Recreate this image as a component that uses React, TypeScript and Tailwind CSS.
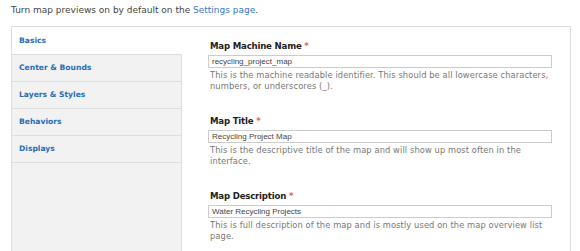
import React from "react";

const tabs = ["Basics", "Center & Bounds", "Layers & Styles", "Behaviors", "Displays"];

const fields = [
    {
        label: "Map Machine Name",
        value: "recycling_project_map",
        help: "This is the machine readable identifier. This should be all lowercase characters, numbers, or underscores (_).",
    },
    {
        label: "Map Title",
        value: "Recycling Project Map",
        help: "This is the descriptive title of the map and will show up most often in the interface.",
    },
    {
        label: "Map Description",
        value: "Water Recycling Projects",
        help: "This is full description of the map and is mostly used on the map overview list page.",
    },
];

export default function App() {
    return (
        <div className="w-[580px] h-[251px] overflow-hidden bg-white font-['DejaVu_Sans',sans-serif] text-[#333]">
            <p className="pl-[11px] pt-[4px] h-[26px] text-[9px] leading-[12px] text-[#444]">
                Turn map previews on by default on the <a className="text-[#3a78c3]">Settings page</a>.
            </p>

            <div className="ml-[11px] w-[560px] h-[225px] flex border-t border-[#ddd]">
                {/* vertical tabs */}
                <ul className="w-[171px] shrink-0 bg-[#f2f2f2] border-l border-r border-[#ddd] flex flex-col">
                    {tabs.map((t, i) => (
                        <li
                            key={t}
                            className={
                                i === 0
                                    ? "h-[28px] bg-white -mr-px border-b border-[#ddd] pl-[7px] flex items-center text-[7.6px] font-bold text-[#2a6db5]"
                                    : "h-[27px] border-b border-[#ddd] pl-[7px] flex items-center text-[7.6px] font-bold text-[#2a6db5]"
                            }
                        >
                            {t}
                        </li>
                    ))}
                </ul>

                {/* form panel */}
                <div className="flex-1 border-r border-[#ddd] pl-[28px] pr-[18px] pt-[13px] flex flex-col gap-[24px]">
                    {fields.map((f) => (
                        <div key={f.label}>
                            <label className="block text-[8.6px] leading-[12px] font-bold tracking-[-0.2px] text-[#222]">
                                {f.label} <span className="text-[#e06060]">*</span>
                            </label>
                            <div className="mt-[3px] -ml-[2px] h-[13px] border border-[#ccc] flex items-center px-[3px] font-['Liberation_Sans',sans-serif] text-[8px] text-[#444]">
                                {f.value}
                            </div>
                            <p className="mt-[2px] text-[8.3px] leading-[10.5px] tracking-[0.1px] text-[#777]">{f.help}</p>
                        </div>
                    ))}
                </div>
            </div>
        </div>
    );
}
